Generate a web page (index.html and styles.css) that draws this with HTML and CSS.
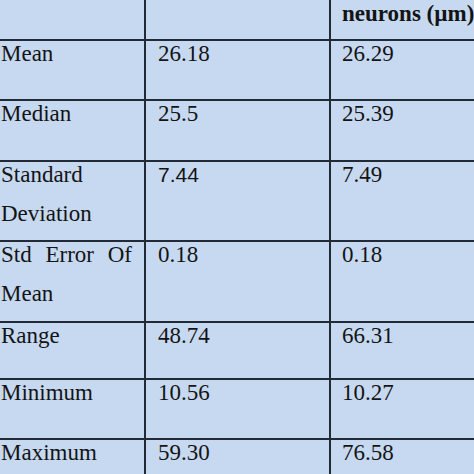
FILE: index.html
```html
<!DOCTYPE html>
<html lang="en">
<head>
<meta charset="utf-8">
<title>Statistics table</title>
<link rel="stylesheet" href="styles.css">
</head>
<body>
<div class="page">
  <div class="grid">
    <div class="cell c1"></div>
    <div class="cell c2"></div>
    <div class="cell c3 head"><div class="txt">neurons (µm)</div></div>

    <div class="cell c1"><div class="txt">Mean</div></div>
    <div class="cell c2"><div class="txt">26.18</div></div>
    <div class="cell c3"><div class="txt">26.29</div></div>

    <div class="cell c1"><div class="txt">Median</div></div>
    <div class="cell c2"><div class="txt">25.5</div></div>
    <div class="cell c3"><div class="txt">25.39</div></div>

    <div class="cell c1"><div class="txt">Standard Deviation</div></div>
    <div class="cell c2"><div class="txt"><span class="sans">7.44</span></div></div>
    <div class="cell c3"><div class="txt">7.49</div></div>

    <div class="cell c1"><div class="txt just">Std Error Of Mean</div></div>
    <div class="cell c2"><div class="txt">0.18</div></div>
    <div class="cell c3"><div class="txt">0.18</div></div>

    <div class="cell c1"><div class="txt">Range</div></div>
    <div class="cell c2"><div class="txt">48.74</div></div>
    <div class="cell c3"><div class="txt">66.31</div></div>

    <div class="cell c1"><div class="txt">Minimum</div></div>
    <div class="cell c2"><div class="txt">10.56</div></div>
    <div class="cell c3"><div class="txt">10.27</div></div>

    <div class="cell c1"><div class="txt">Maximum</div></div>
    <div class="cell c2"><div class="txt">59.30</div></div>
    <div class="cell c3"><div class="txt">76.58</div></div>
  </div>
</div>
</body>
</html>
```
FILE: styles.css
```css
html, body {
  margin: 0;
  padding: 0;
  background: #c6d9f1;
}

.page {
  width: 474px;
  height: 474px;
  overflow: hidden;
}

.grid {
  display: grid;
  grid-template-columns: 144px 183px 200px;
  grid-template-rows: 39px 58px 59px 78px 79px 55px 58px 60px;
  gap: 2px;
  background: #222a36;
  width: 531px;
  font-family: "Liberation Serif", "Times New Roman", serif;
  font-size: 23px;
  color: #141414;
}

.cell {
  background: #c6d9f1;
  overflow: hidden;
}

.c1 {
  padding-left: 1px;
  padding-right: 12px;
}

.c2 {
  padding-left: 12px;
}

.c3 {
  padding-left: 11px;
}

.txt {
  line-height: 39.4px;
  margin-top: -7.5px;
}

.head .txt {
  margin-top: -5.8px;
  font-weight: bold;
  white-space: nowrap;
}

.just {
  text-align: justify;
}

.sans {
  font-family: "Liberation Sans", Arial, sans-serif;
  font-size: 21px;
}
```
